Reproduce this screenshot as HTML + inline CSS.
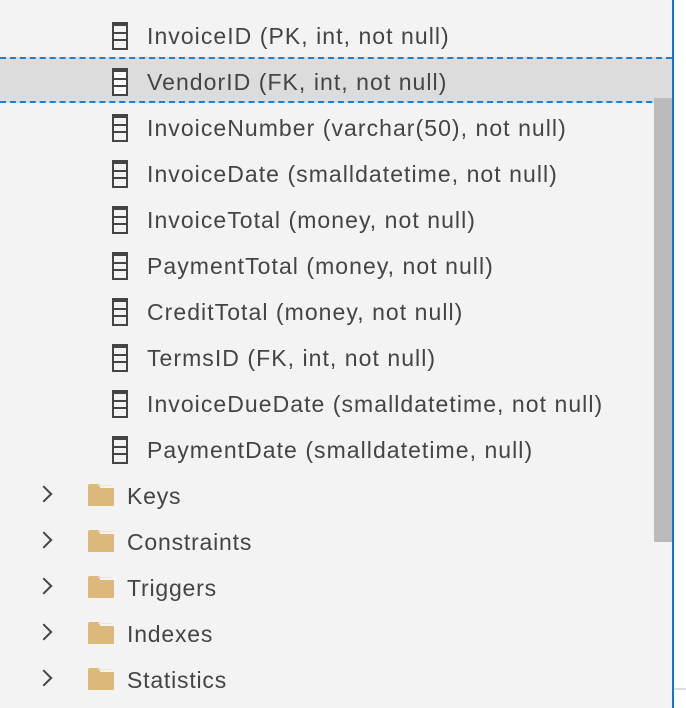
<!DOCTYPE html>
<html><head><style>
html,body{margin:0;padding:0;width:686px;height:708px;overflow:hidden;background:#fff;font-family:"Liberation Sans",Arial,sans-serif;}
#panel{position:absolute;left:0;top:0;width:672px;height:708px;background:#f3f3f3;}
#bl{position:absolute;left:672px;top:0;width:2px;height:708px;background:#0a78d7;}
#sb{position:absolute;left:654px;top:98px;width:18px;height:444px;background:#bbbbbb;}
#sel{position:absolute;left:0;top:57px;width:672px;height:42px;background:#dcdcdc;border-top:2px dashed #1a7fd6;border-bottom:2px dashed #1a7fd6;}
.row{position:absolute;left:0;height:46px;width:650px;}
.t{position:absolute;top:10px;font-size:23px;letter-spacing:1.05px;color:#444;white-space:nowrap;line-height:26px;}
.f{letter-spacing:0.8px;}
.ic{position:absolute;left:112px;top:9px;width:12px;height:22px;border:2px solid #444;border-top-width:4px;background:#f3f3f3;}
.ic:before,.ic:after{content:"";position:absolute;left:0;right:0;height:2px;background:#444;}
.ic:before{top:6px}.ic:after{top:13px}
.ch{position:absolute;left:38px;top:15px;width:10px;height:10px;border-right:2px solid #444;border-bottom:2px solid #444;transform:rotate(-45deg);}
.fd{position:absolute;left:88px;top:15px;width:26px;height:18px;background:#dcb87a;border-radius:1px;}
.fd:before{content:"";position:absolute;left:0;top:-4px;width:12px;height:5px;background:#dcb87a;border-radius:2px 2px 0 0;}
.fd:after{content:"";position:absolute;left:10px;top:-3px;width:15px;height:1px;background:#f0e4cc;}
</style></head><body>
<div id="panel"></div>
<div id="sel"></div>
<div id="sb"></div>
<div id="bl"></div>
<div class="row" style="top:13px"><div class="ic"></div><div class="t" style="left:147px">InvoiceID (PK, int, not null)</div></div>
<div class="row" style="top:59px"><div class="ic" style="background:#fff"></div><div class="t" style="left:147px">VendorID (FK, int, not null)</div></div>
<div class="row" style="top:105px"><div class="ic"></div><div class="t" style="left:147px">InvoiceNumber (varchar(50), not null)</div></div>
<div class="row" style="top:151px"><div class="ic"></div><div class="t" style="left:147px">InvoiceDate (smalldatetime, not null)</div></div>
<div class="row" style="top:197px"><div class="ic"></div><div class="t" style="left:147px">InvoiceTotal (money, not null)</div></div>
<div class="row" style="top:243px"><div class="ic"></div><div class="t" style="left:147px">PaymentTotal (money, not null)</div></div>
<div class="row" style="top:289px"><div class="ic"></div><div class="t" style="left:147px">CreditTotal (money, not null)</div></div>
<div class="row" style="top:335px"><div class="ic"></div><div class="t" style="left:147px">TermsID (FK, int, not null)</div></div>
<div class="row" style="top:381px"><div class="ic"></div><div class="t" style="left:147px">InvoiceDueDate (smalldatetime, not null)</div></div>
<div class="row" style="top:427px"><div class="ic"></div><div class="t" style="left:147px">PaymentDate (smalldatetime, null)</div></div>
<div class="row" style="top:473px"><div class="ch"></div><div class="fd"></div><div class="t f" style="left:127px">Keys</div></div>
<div class="row" style="top:519px"><div class="ch"></div><div class="fd"></div><div class="t f" style="left:127px">Constraints</div></div>
<div class="row" style="top:565px"><div class="ch"></div><div class="fd"></div><div class="t f" style="left:127px">Triggers</div></div>
<div class="row" style="top:611px"><div class="ch"></div><div class="fd"></div><div class="t f" style="left:127px">Indexes</div></div>
<div class="row" style="top:657px"><div class="ch"></div><div class="fd"></div><div class="t f" style="left:127px">Statistics</div></div>
<div style="position:absolute;left:674px;top:688px;width:12px;height:2px;background:#ddd"></div>
</body></html>
